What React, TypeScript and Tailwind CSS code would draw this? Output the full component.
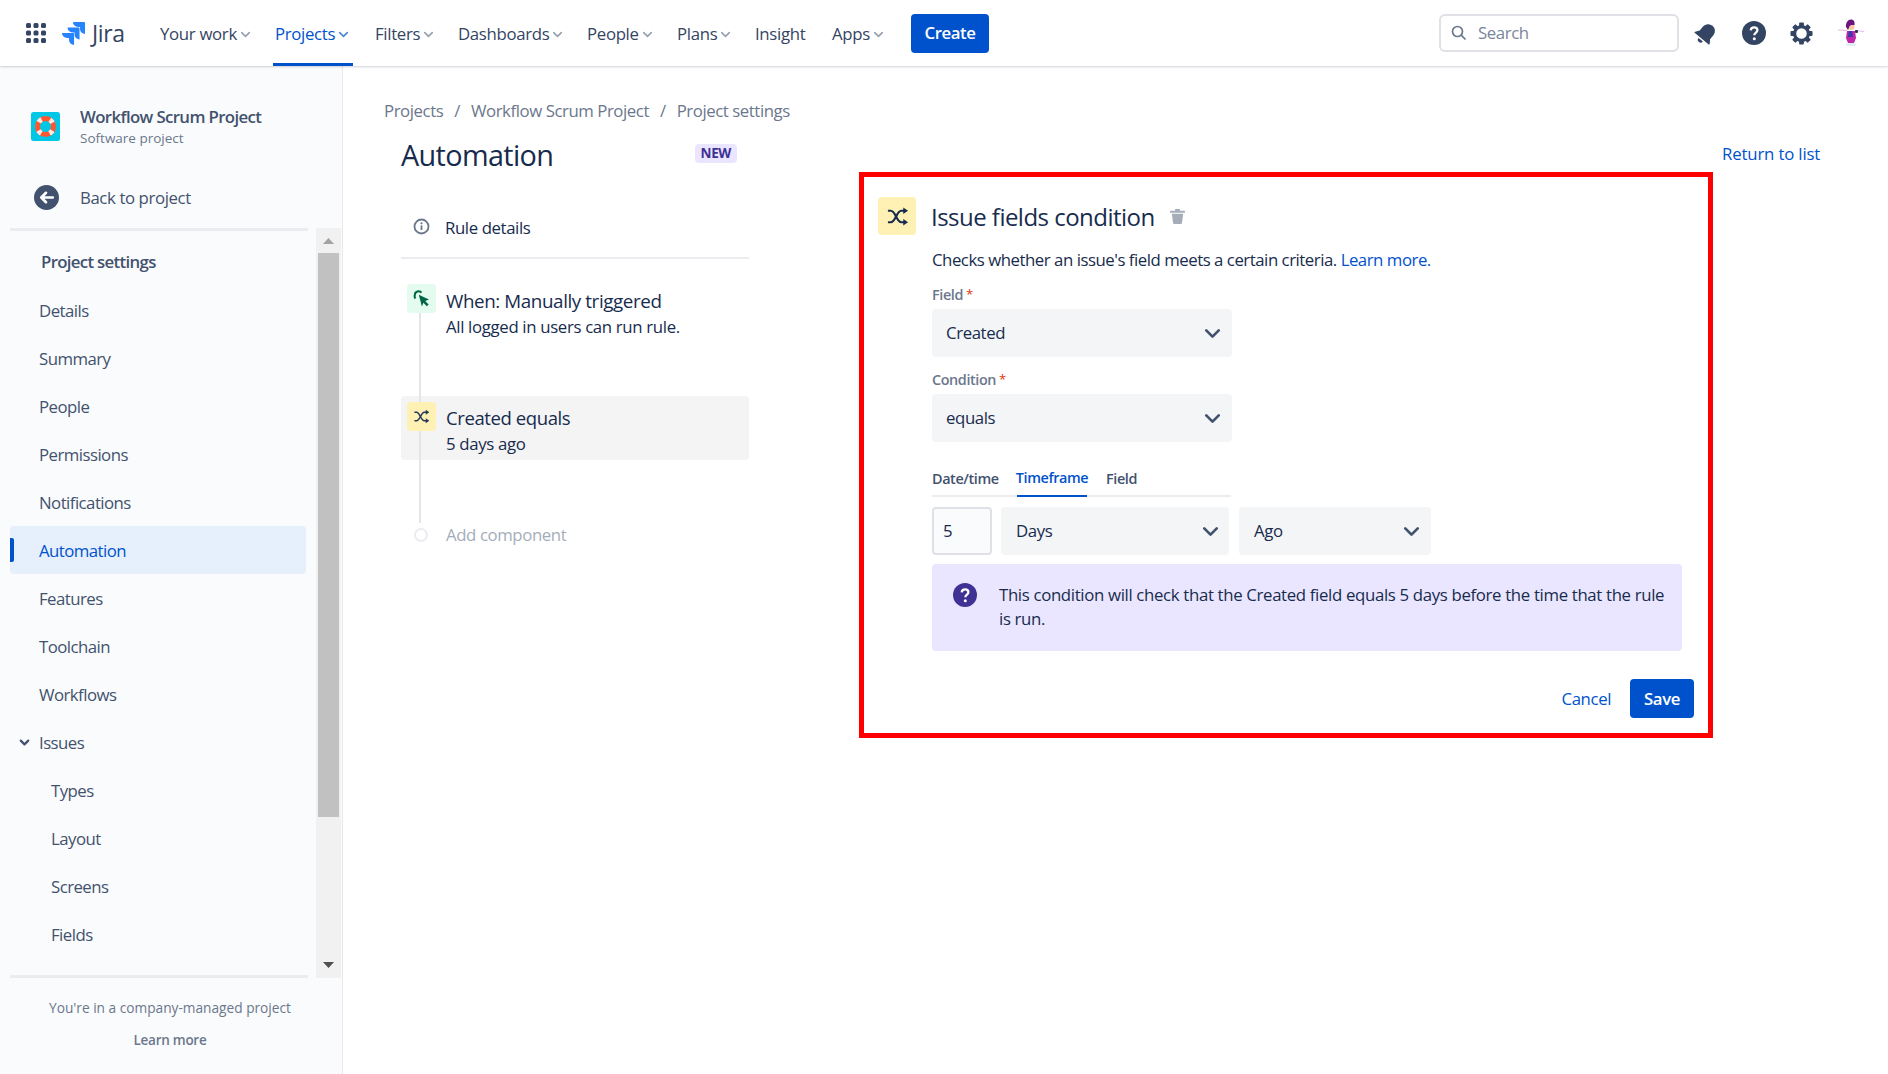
import { ChevronDown } from "lucide-react";

const NAV = [
  { label: "Your work", w: "w-[115px]", chevron: true },
  { label: "Projects", w: "w-[100px]", chevron: true, active: true },
  { label: "Filters", w: "w-[83px]", chevron: true },
  { label: "Dashboards", w: "w-[129px]", chevron: true },
  { label: "People", w: "w-[90px]", chevron: true },
  { label: "Plans", w: "w-[78px]", chevron: true },
  { label: "Insight", w: "w-[77px]", chevron: false },
  { label: "Apps", w: "w-[79px]", chevron: true },
];

const SETTINGS = ["Details", "Summary", "People", "Permissions", "Notifications"];
const SETTINGS_2 = ["Features", "Toolchain", "Workflows"];
const ISSUES = ["Types", "Layout", "Screens", "Fields"];

function GridIcon() {
  return (
    <svg width="20" height="20" viewBox="0 0 20 20" fill="#344563">
      {[0, 7.5, 15].map((y) =>
        [0, 7.5, 15].map((x) => <rect key={`${x}-${y}`} x={x} y={y} width="5" height="5" rx="1.5" />),
      )}
    </svg>
  );
}

function JiraLogo() {
  return (
    <svg width="23" height="23" viewBox="0 0 24 24" fill="#2684ff">
      <path d="M11.571 11.513H0a5.218 5.218 0 0 0 5.232 5.215h2.13v2.057A5.215 5.215 0 0 0 12.575 24V12.518a1.005 1.005 0 0 0-1.005-1.005zm5.723-5.756H5.736a5.215 5.215 0 0 0 5.215 5.214h2.129v2.058a5.218 5.218 0 0 0 5.215 5.214V6.758a1.001 1.001 0 0 0-1.001-1.001zM23.013 0H11.455a5.215 5.215 0 0 0 5.215 5.215h2.129v2.057A5.215 5.215 0 0 0 24 12.483V1.005A1.001 1.001 0 0 0 23.013 0Z" />
    </svg>
  );
}

function BellIcon() {
  return (
    <svg width="27" height="27" viewBox="0 0 22 24" fill="#344563">
      <g transform="rotate(40 11 12)">
        <path d="M11 3a6 6 0 0 0-6 6v4.500L2.500 17v1h17v-1L17 13.500V9a6 6 0 0 0-6-6z" />
        <path d="M8.500 19.300h5a2.500 2.500 0 0 1-5 0z" />
      </g>
    </svg>
  );
}

function HelpGlyph({ fill }: { fill: string }) {
  return (
    <svg className="shrink-0" width="24" height="24" viewBox="0 0 24 24">
      <circle cx="12" cy="12" r="12" fill={fill} />
      <path d="M8.700 9.300c.2-1.900 1.600-3 3.400-3 1.900 0 3.300 1.100 3.300 2.800 0 1.400-.8 2.100-1.700 2.800-.8.6-1.300 1-1.300 2v.4" fill="none" stroke="#fff" strokeWidth="2.300" />
      <circle cx="12.300" cy="17.800" r="1.500" fill="#fff" />
    </svg>
  );
}

function GearIcon() {
  return (
    <svg width="23" height="23" viewBox="0 0 24 24" fill="#344563">
      {[0, 45, 90, 135, 180, 225, 270, 315].map((a) => (
        <rect key={a} x="9.500" y="0.500" width="5" height="5" rx="1" transform={`rotate(${a} 12 12)`} />
      ))}
      <circle cx="12" cy="12" r="7.200" fill="none" stroke="#344563" strokeWidth="3.400" />
    </svg>
  );
}

function AvatarIcon() {
  return (
    <svg width="26" height="28" viewBox="0 0 26 28">
      <ellipse cx="13" cy="25.500" rx="5" ry="1.500" fill="#deebf5" />
      <path d="M0 11l9 .5M17 11.500l9 1" stroke="#e7b6e6" strokeWidth="1" />
      <path d="M9 12h8l1 7-2 5h-6l-2-5z" fill="#c026a8" />
      <path d="M11 12h3l1 6h-5z" fill="#3b3aa8" />
      <circle cx="13" cy="7.500" r="3.500" fill="#f8c9a4" />
      <path d="M8 8c-.5-4 2-7.500 5-7.500S17 3 16.500 6C14 6 11.500 5.500 11 8.500l-1 2.500z" fill="#6b1580" />
      <rect x="17" y="11" width="3" height="3" rx="1" fill="#253858" />
    </svg>
  );
}

function LifebuoyLogo() {
  return (
    <svg width="29" height="29" viewBox="0 0 29 29">
      <rect width="29" height="29" rx="2.500" fill="#00c7e6" />
      <circle cx="14.500" cy="14.500" r="8" fill="none" stroke="#ff5630" strokeWidth="5" />
      <circle cx="14.500" cy="14.500" r="8" fill="none" stroke="#ffe9e4" strokeWidth="5" strokeDasharray="4 8.570" strokeDashoffset="8.280" />
    </svg>
  );
}

function BackIcon() {
  return (
    <svg width="25" height="25" viewBox="0 0 24 24">
      <circle cx="12" cy="12" r="12" fill="#42526e" />
      <path d="M18 12H7M11.500 7.500L7 12l4.500 4.500" fill="none" stroke="#fff" strokeWidth="2.600" strokeLinecap="round" strokeLinejoin="round" />
    </svg>
  );
}

function InfoIcon() {
  return (
    <svg width="17" height="17" viewBox="0 0 17 17">
      <circle cx="8.500" cy="8.500" r="7" fill="none" stroke="#6b778c" strokeWidth="1.800" />
      <rect x="7.600" y="7.400" width="1.800" height="4.600" fill="#6b778c" />
      <circle cx="8.500" cy="5.300" r="1.100" fill="#6b778c" />
    </svg>
  );
}

function ClickIcon() {
  return (
    <svg width="17" height="17" viewBox="0 0 17 17">
      <path d="M2.500 8.500A3.800 3.800 0 0 1 1.800 5 3.800 3.800 0 0 1 8.500 2.700" fill="none" stroke="#006644" strokeWidth="2" />
      <path d="M5.800 4.800l10.200 4.700-3.800 1.400 3.400 3.700-1.700 1.700-3.500-3.600-1.500 3.700z" fill="#006644" />
    </svg>
  );
}

function ShuffleIcon({ size, color }: { size: number; color: string }) {
  return (
    <svg width={size} height={size} viewBox="0 0 24 24" fill="none" stroke={color} strokeWidth="2.200">
      <path d="M2 6h3c5 0 6 12 11 12h3" />
      <path d="M2 18h3c5 0 6-12 11-12h3" />
      <path d="M18 2.500L23 6l-5 3.500zM18 14.500l5 3.500-5 3.500z" fill={color} stroke="none" />
    </svg>
  );
}

function TrashIcon() {
  return (
    <svg width="15" height="15" viewBox="0 0 15 15" fill="#a5adba">
      <rect x="0" y="1.800" width="15" height="2" rx=".5" />
      <rect x="5" y="0" width="5" height="2" rx=".8" />
      <path d="M1.800 4.800h11.400L12 13.500a1.500 1.500 0 0 1-1.500 1.500h-6A1.500 1.500 0 0 1 3 13.500z" />
    </svg>
  );
}

function SelectBox({ label, w, chevron, pad }: { label: string; w: string; chevron: string; pad: string }) {
  return (
    <div className={`flex h-[48px] items-center justify-between rounded-[4px] bg-[#f4f5f7] ${w}`}>
      <span className={`text-[16.800px] text-[#172b4d] ${pad}`}>{label}</span>
      <ChevronDown className={chevron} size={25} strokeWidth={2.600} color="#42526e" />
    </div>
  );
}

function FieldLabel({ children }: { children: string }) {
  return (
    <div className="flex h-[24px] items-center text-[14.400px] font-semibold text-[#6b778c]">
      {children}
      <span className="ml-[3px] text-[13px] font-normal text-[#de350b]">*</span>
    </div>
  );
}

function SideItem({ label, indent }: { label: string; indent?: boolean }) {
  return (
    <div className={`flex h-[48px] items-center text-[16.800px] tracking-[-0.032em] text-[#42526e] ${indent ? "pl-[41px]" : "pl-[29px]"}`}>
      {label}
    </div>
  );
}

export default function App() {
  return (
    <div className="flex h-screen flex-col overflow-hidden bg-white font-['Open_Sans','Noto_Sans',sans-serif] tracking-[-0.025em]">
      {/* top nav */}
      <header className="relative z-30 flex h-[66px] shrink-0 items-center bg-white shadow-[0_1px_2px_rgba(9,30,66,0.2)]">
        <div className="ml-[26px] shrink-0">
          <GridIcon />
        </div>
        <div className="ml-[16px] flex w-[98px] shrink-0 items-center">
          <JiraLogo />
          <span className="ml-[7px] text-[23px] leading-none text-[#344563]">Jira</span>
        </div>
        {NAV.map((n) => (
          <div key={n.label} className={`relative flex h-full shrink-0 items-center pt-[2px] tracking-[-0.02em] ${n.w}`}>
            <span className={`text-[16.800px] ${n.active ? "text-[#0052cc]" : "text-[#344563]"}`}>{n.label}</span>
            {n.chevron && (
              <ChevronDown className="ml-[1px]" size={15} strokeWidth={2.600} color={n.active ? "#4c86d9" : "#97a0af"} />
            )}
            {n.active && <div className="absolute bottom-0 left-[-2px] h-[3px] w-[80px] bg-[#0052cc]" />}
          </div>
        ))}
        <button className="flex h-[39px] w-[78px] shrink-0 items-center justify-center rounded-[4px] bg-[#0052cc] text-[16.800px] font-semibold text-white">
          Create
        </button>
        <div className="ml-[450px] flex h-[38px] w-[240px] shrink-0 items-center rounded-[6px] border-2 border-[#dfe1e6] pl-[10px]">
          <svg width="16" height="16" viewBox="0 0 16 16" fill="none" stroke="#6b778c" strokeWidth="1.700">
            <circle cx="6.500" cy="6.500" r="5" />
            <path d="M10.200 10.200L14.500 14.500" />
          </svg>
          <span className="ml-[11px] text-[16.800px] text-[#7a869a]">Search</span>
        </div>
        <div className="ml-[14px] flex w-[26px] shrink-0 justify-center">
          <BellIcon />
        </div>
        <div className="ml-[23px] flex shrink-0">
          <HelpGlyph fill="#344563" />
        </div>
        <div className="ml-[24px] flex shrink-0">
          <GearIcon />
        </div>
        <div className="ml-[25px] flex shrink-0">
          <AvatarIcon />
        </div>
      </header>

      <div className="flex min-h-0 flex-1">
        {/* sidebar */}
        <aside className="flex w-[343px] shrink-0 flex-col border-r border-[#e6e8ec] bg-[#fafbfc]">
          <div className="h-[162px] shrink-0">
            <div className="flex pl-[31px] pt-[46px]">
              <LifebuoyLogo />
              <div className="ml-[20px] -mt-[7px]">
                <div className="text-[16.800px] font-semibold leading-[24px] tracking-[-0.037em] text-[#42526e]">Workflow Scrum Project</div>
                <div className="text-[13.500px] leading-[18px] tracking-normal text-[#6b778c]">Software project</div>
              </div>
            </div>
            <div className="mt-[38px] flex items-center pl-[34px]">
              <BackIcon />
              <span className="ml-[21px] text-[16.800px] text-[#42526e]">Back to project</span>
            </div>
          </div>
          <div className="flex h-[750px] shrink-0">
            <div className="ml-[10px] w-[298px] border-y-[3px] border-[#ebecf0] pt-[7px]">
              <div className="flex h-[48px] items-center pl-[31px] text-[16.800px] font-semibold tracking-[-0.04em] text-[#42526e]">
                Project settings
              </div>
              <div className="h-[1px]" />
              {SETTINGS.map((s) => (
                <SideItem key={s} label={s} />
              ))}
              <div className="relative -mt-[1px] mb-[1px] flex h-[48px] w-[296px] items-center rounded-[4px] bg-[#e6effc] pl-[29px] pt-[1px] text-[16.800px] tracking-[-0.032em] text-[#0052cc]">
                <div className="absolute bottom-[12px] left-0 top-[12px] w-[4px] rounded-r-[2px] bg-[#0052cc]" />
                Automation
              </div>
              {SETTINGS_2.map((s) => (
                <SideItem key={s} label={s} />
              ))}
              <div className="relative">
                <ChevronDown className="absolute left-[7px] top-[16px]" size={15} strokeWidth={3.500} color="#42526e" />
                <SideItem label="Issues" />
              </div>
              {ISSUES.map((s) => (
                <SideItem key={s} label={s} indent />
              ))}
            </div>
            <div className="ml-[8px] flex w-[25px] flex-col items-center bg-[#f1f1f1]">
              <svg className="mt-[10px]" width="11" height="6" viewBox="0 0 11 6" fill="#a3a3a3">
                <path d="M5.500 0L11 6H0z" />
              </svg>
              <div className="mt-[9px] h-[564px] w-[21px] bg-[#c1c1c1]" />
              <svg className="mt-[145px]" width="11" height="6" viewBox="0 0 11 6" fill="#505050">
                <path d="M0 0h11L5.500 6z" />
              </svg>
            </div>
          </div>
          <div className="flex flex-col items-center pr-[2px] pt-[19px] text-[13.700px] tracking-normal text-[#6b778c]">
            <div className="leading-[22px]">You're in a company-managed project</div>
            <div className="mt-[10px] text-[13.500px] font-semibold leading-[22px] tracking-[-0.02em]">Learn more</div>
          </div>
        </aside>

        {/* main */}
        <main className="min-w-0 flex-1 bg-white pt-[33px]">
          <div className="flex h-[24px] items-center pl-[41px] text-[16.800px] tracking-[-0.026em] text-[#6b778c]">
            <span>Projects</span>
            <span className="mx-[11px]">/</span>
            <span>Workflow Scrum Project</span>
            <span className="mx-[11px]">/</span>
            <span>Project settings</span>
          </div>
          <div className="flex">
            {/* rule column */}
            <div className="ml-[58px] w-[348px] shrink-0">
              <div className="mt-[12px] flex h-[40px] items-center justify-between pr-[12px]">
                <h1 className="text-[28.800px] font-medium tracking-[-0.022em] text-[#172b4d]">Automation</h1>
                <span className="-mt-[3px] rounded-[4px] bg-[#eae6ff] px-[6px] text-[13.500px] font-bold leading-[19px] text-[#403294]">
                  NEW
                </span>
              </div>
              <div className="mt-[32px] flex h-[40px] items-center">
                <div className="ml-[12px] flex -mt-[1px]">
                  <InfoIcon />
                </div>
                <span className="ml-[15px] pt-[1px] text-[16.800px] text-[#172b4d]">Rule details</span>
              </div>
              <div className="mt-[10px] h-[2px] bg-[#ebecf0]" />

              <div className="relative mt-[19px]">
                <div className="flex h-[64px]">
                  <div className="relative z-20 ml-[6px] mt-[6px] flex h-[29px] w-[29px] items-center justify-center rounded-[4px] bg-[#e3fcef]">
                    <ClickIcon />
                  </div>
                  <div className="ml-[10px] pt-[9px]">
                    <div className="text-[18.800px] leading-[28px] text-[#172b4d]">When: Manually triggered</div>
                    <div className="text-[16.800px] leading-[24px] tracking-[-0.02em] text-[#172b4d]">All logged in users can run rule.</div>
                  </div>
                </div>
                <div className="mt-[54px] flex h-[64px] rounded-[4px] bg-[#f4f4f5]">
                  <div className="relative z-20 ml-[6px] mt-[6px] flex h-[29px] w-[29px] items-center justify-center rounded-[4px] bg-[#fff0b3]">
                    <ShuffleIcon size={17} color="#253858" />
                  </div>
                  <div className="ml-[10px] pt-[8px]">
                    <div className="text-[18.500px] leading-[28px] text-[#172b4d]">Created equals</div>
                    <div className="text-[16.800px] leading-[24px] tracking-[-0.02em] text-[#172b4d]">5 days ago</div>
                  </div>
                </div>
                <div className="absolute bottom-[24px] left-[18px] top-[30px] z-10 w-[2px] bg-[#e4e5ea]" />
                <div className="mt-[63px] flex h-[24px] items-center">
                  <div className="ml-[13px] h-[14px] w-[14px] rounded-full border-2 border-[#ebecf0] bg-white" />
                  <span className="ml-[18px] text-[16.800px] text-[#a5adba]">Add component</span>
                </div>
              </div>
            </div>

            {/* condition editor */}
            <section className="ml-[110px] mt-[49px] h-[566px] w-[854px] shrink-0 border-[5px] border-[#ff0000] pl-[14px] pt-[20px]">
              <div className="flex">
                <div className="flex h-[38px] w-[38px] shrink-0 items-center justify-center rounded-[4px] bg-[#fff0b3]">
                  <ShuffleIcon size={23} color="#172b4d" />
                </div>
                <div className="ml-[15px] flex h-[38px] items-center pt-[2px]">
                  <h2 className="text-[24px] font-medium tracking-[-0.022em] text-[#172b4d]">Issue fields condition</h2>
                  <div className="ml-[15px] flex -mt-[2px]">
                    <TrashIcon />
                  </div>
                </div>
              </div>
              <div className="ml-[54px] pr-[26px]">
                <p className="mt-[13px] text-[16.800px] leading-[24px] tracking-[-0.028em] text-[#172b4d]">
                  Checks whether an issue's field meets a certain criteria.{" "}
                  <span className="text-[#0052cc]">Learn more.</span>
                </p>
                <div className="mt-[11px]">
                  <FieldLabel>Field</FieldLabel>
                </div>
                <div className="mt-[2px]">
                  <SelectBox label="Created" w="w-[300px]" chevron="mr-[7px]" pad="pl-[14px]" />
                </div>
                <div className="mt-[11px]">
                  <FieldLabel>Condition</FieldLabel>
                </div>
                <div className="mt-[2px]">
                  <SelectBox label="equals" w="w-[300px]" chevron="mr-[7px]" pad="pl-[14px]" />
                </div>
                <div className="mt-[25px] flex h-[30px] w-[299px] items-end border-b-2 border-[#ebecf0] text-[14.400px] font-semibold">
                  <div className="flex h-[30px] w-[85px] items-center pb-[2px] text-[#42526e]">Date/time</div>
                  <div className="-mb-[2px] flex h-[32px] w-[70px] items-center justify-center border-b-2 border-[#0052cc] pb-[4px] text-[#0052cc]">
                    Timeframe
                  </div>
                  <div className="ml-[19px] flex h-[30px] items-center pb-[2px] text-[#42526e]">Field</div>
                </div>
                <div className="mt-[10px] flex">
                  <div className="flex h-[48px] w-[60px] items-center rounded-[4px] border-2 border-[#dfe1e6] bg-[#fafbfc] pl-[9px] text-[16.800px] text-[#172b4d]">
                    5
                  </div>
                  <div className="ml-[9px]">
                    <SelectBox label="Days" w="w-[228px]" chevron="mr-[6px]" pad="pl-[15px]" />
                  </div>
                  <div className="ml-[10px]">
                    <SelectBox label="Ago" w="w-[192px]" chevron="mr-[7px]" pad="pl-[15px]" />
                  </div>
                </div>
                <div className="mt-[9px] flex h-[87px] w-[750px] rounded-[4px] bg-[#eae6ff] pl-[21px] pt-[19px]">
                  <HelpGlyph fill="#403294" />
                  <p className="ml-[22px] w-[668px] text-[16.800px] leading-[24px] tracking-[-0.02em] text-[#172b4d]">
                    This condition will check that the Created field equals 5 days before the time that the rule is run.
                  </p>
                </div>
                <div className="mt-[28px] flex w-[762px] items-center justify-end">
                  <span className="text-[16.800px] font-medium text-[#0052cc]">Cancel</span>
                  <button className="ml-[19px] flex h-[39px] w-[64px] items-center justify-center rounded-[4px] bg-[#0052cc] text-[16.800px] font-semibold text-white">
                    Save
                  </button>
                </div>
              </div>
            </section>

            <div className="ml-[9px] mt-[19px] text-[16.800px] font-medium leading-[24px] tracking-[-0.01em] text-[#0052cc]">Return to list</div>
          </div>
        </main>
      </div>
    </div>
  );
}
